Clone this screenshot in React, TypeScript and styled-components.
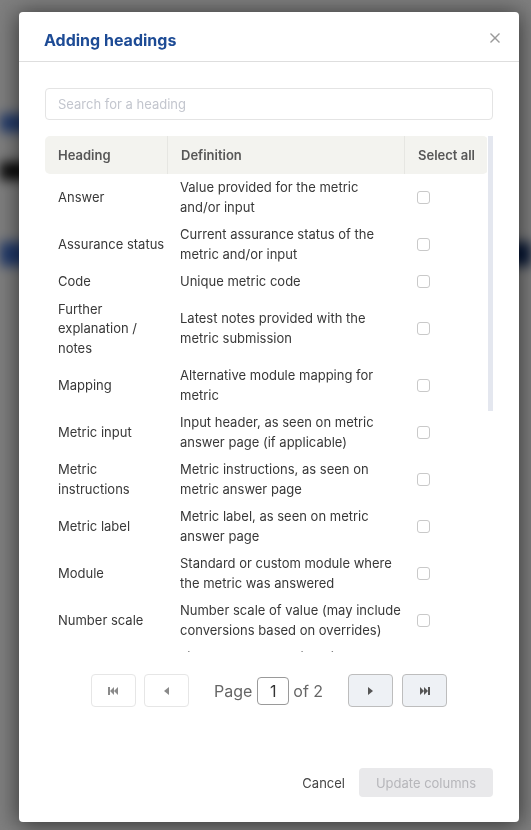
import React from "react";
import styled, { createGlobalStyle } from "styled-components";

interface HeadingOption {
  id: number;
  heading: string;
  definition: string;
}

const headings: HeadingOption[] = [
  { id: 1, heading: "Answer", definition: "Value provided for the metric and/or input" },
  { id: 2, heading: "Assurance status", definition: "Current assurance status of the metric and/or input" },
  { id: 3, heading: "Code", definition: "Unique metric code" },
  { id: 4, heading: "Further explanation / notes", definition: "Latest notes provided with the metric submission" },
  { id: 5, heading: "Mapping", definition: "Alternative module mapping for metric" },
  { id: 6, heading: "Metric input", definition: "Input header, as seen on metric answer page (if applicable)" },
  { id: 7, heading: "Metric instructions", definition: "Metric instructions, as seen on metric answer page" },
  { id: 8, heading: "Metric label", definition: "Metric label, as seen on metric answer page" },
  { id: 9, heading: "Module", definition: "Standard or custom module where the metric was answered" },
  { id: 10, heading: "Number scale", definition: "Number scale of value (may include conversions based on overrides)" },
  { id: 11, heading: "Previous period", definition: "Link to answer provided in the previous period" },
  { id: 12, heading: "Reporting period", definition: "Start and end date of the reporting period" },
  { id: 13, heading: "Source", definition: "Source of the data provided for the metric" },
  { id: 14, heading: "Status", definition: "Current status of the metric submission" },
  { id: 15, heading: "Subsidiary", definition: "Name of the subsidiary providing the answer" },
  { id: 16, heading: "Tags", definition: "Tags assigned to the metric" },
  { id: 17, heading: "Type", definition: "Data type of the value provided for the metric" },
  { id: 18, heading: "Unit", definition: "Unit of measure of the value (if applicable)" },
  { id: 19, heading: "Updated by", definition: "User who last updated the metric answer" },
  { id: 20, heading: "Updated date", definition: "Date and time the metric answer was last updated" },
];

const GlobalStyle = createGlobalStyle`
  html, body {
    margin: 0;
    padding: 0;
  }
  body {
    width: 531px;
    height: 830px;
    overflow: hidden;
    font-family: Inter, "Noto Sans", sans-serif;
  }
`;

/* blurred page behind the dialog */
const Page = styled.div`
  height: 830px;
  box-sizing: border-box;
  background: #f8f8f8;
  filter: blur(6px);
  display: flex;
  flex-direction: column;
  padding-top: 114px;
`;

const PageRow = styled.div<{ $h: number; $top: number }>`
  display: flex;
  justify-content: space-between;
  height: ${(p) => p.$h}px;
  margin-top: ${(p) => p.$top}px;
`;

const Smudge = styled.div<{ $w: number; $color: string }>`
  width: ${(p) => p.$w}px;
  background: ${(p) => p.$color};
`;

const Overlay = styled.div`
  position: fixed;
  inset: 0;
  background: rgba(0, 0, 0, 0.5);
  display: flex;
  align-items: flex-start;
  padding: 12px 0 0 19px;
`;

const Modal = styled.div`
  width: 500px;
  height: 810px;
  background: #fff;
  border-radius: 4px;
  box-shadow: 0 2px 22px rgba(0, 0, 0, 0.6);
  display: flex;
  flex-direction: column;
  box-sizing: border-box;
`;

const Header = styled.div`
  height: 50px;
  box-sizing: border-box;
  border-bottom: 1px solid #dedede;
  padding: 18px 19px 0 25px;
  display: flex;
  justify-content: space-between;
  align-items: flex-start;
`;

const Title = styled.h2`
  margin: 0;
  font-size: 16px;
  line-height: 20px;
  font-weight: 700;
  color: #1d4b95;
`;

const Close = styled.button`
  border: none;
  background: none;
  padding: 0;
  margin-top: 3px;
  display: flex;
  cursor: pointer;
`;

const Body = styled.div`
  padding: 26px 26px 0 26px;
  display: flex;
  flex-direction: column;
`;

const Search = styled.input`
  height: 32px;
  box-sizing: border-box;
  border: 1px solid #e4e4e4;
  border-radius: 4px;
  padding: 0 12px;
  font-family: inherit;
  font-size: 13px;
  color: #333;
  outline: none;
  &::placeholder {
    color: #c3c6ce;
  }
`;

const ScrollFrame = styled.div`
  margin-top: 16px;
  height: 516px;
  display: flex;
`;

const ScrollViewport = styled.div`
  flex: 1;
  overflow: hidden;
`;

const ScrollTrack = styled.div`
  width: 5px;
  margin-left: 1px;
`;

const ScrollThumb = styled.div`
  height: 275px;
  background: #e4e7ef;
`;

const Table = styled.table`
  width: 100%;
  table-layout: fixed;
  border-collapse: separate;
  border-spacing: 0;
`;

const Col = styled.col<{ $w: number }>`
  width: ${(p) => p.$w}px;
`;

const Th = styled.th`
  background: #f3f3ef;
  text-align: left;
  font-size: 13px;
  line-height: 20px;
  font-weight: 600;
  color: #575757;
  padding: 9px 0 9px 13px;
  border-left: 1px solid #e6e6e2;
  white-space: nowrap;
  &:first-child {
    border-left: none;
    border-radius: 5px 0 0 5px;
  }
  &:last-child {
    border-radius: 0 5px 5px 0;
  }
`;

const Td = styled.td<{ $padRight?: number }>`
  font-size: 13px;
  line-height: 19.5px;
  color: #383838;
  padding: 4px ${(p) => p.$padRight ?? 0}px 4px 13px;
  vertical-align: middle;
`;

const Check = styled.input`
  appearance: none;
  display: block;
  margin: 0;
  width: 13px;
  height: 13px;
  box-sizing: border-box;
  border: 1px solid #c9c9c9;
  border-radius: 3px;
  background: #fff;
`;

const Pager = styled.div`
  margin-top: 22px;
  display: flex;
  justify-content: center;
  align-items: center;
`;

const PageButton = styled.button<{ $active?: boolean; $gap: number }>`
  width: 45px;
  height: 33px;
  box-sizing: border-box;
  border-radius: 4px;
  border: 1px solid ${(p) => (p.$active ? "#bdbdbd" : "#e6e6e6")};
  background: ${(p) => (p.$active ? "#eef1f5" : "#fff")};
  color: ${(p) => (p.$active ? "#555" : "#8a8a8a")};
  margin-left: ${(p) => p.$gap}px;
  display: flex;
  align-items: center;
  justify-content: center;
  padding: 0;
`;

const PageInfo = styled.div`
  margin: 0 25px;
  display: flex;
  align-items: center;
  gap: 4px;
  font-size: 16px;
  color: #666;
`;

const PageInput = styled.input`
  width: 32px;
  height: 28px;
  box-sizing: border-box;
  margin-left: 1px;
  border: 1px solid #9a9a9a;
  border-radius: 4px;
  text-align: center;
  font-family: inherit;
  font-size: 16px;
  color: #333;
  padding: 0;
`;

const Footer = styled.div`
  margin-top: auto;
  padding: 0 26px 25px;
  display: flex;
  justify-content: flex-end;
  align-items: center;
  gap: 14px;
`;

const TextButton = styled.button`
  border: none;
  background: none;
  padding: 0;
  font-family: inherit;
  font-size: 13px;
  color: #444;
`;

const PrimaryButton = styled.button`
  width: 134px;
  height: 29px;
  border: none;
  border-radius: 4px;
  background: #e9e9eb;
  color: #b6b6ba;
  font-family: inherit;
  font-size: 13px;
`;

const FirstIcon = () => (
  <svg width="10" height="8" viewBox="0 0 10 8" fill="currentColor">
    <rect x="0" y="0" width="2" height="8" />
    <polygon points="2,4 6,0 6,8" />
    <polygon points="6,4 10,0 10,8" />
  </svg>
);

const LastIcon = () => (
  <svg width="10" height="8" viewBox="0 0 10 8" fill="currentColor">
    <polygon points="0,0 4,4 0,8" />
    <polygon points="4,0 8,4 4,8" />
    <rect x="8" y="0" width="2" height="8" />
  </svg>
);

const PrevIcon = () => (
  <svg width="5" height="8" viewBox="0 0 5 8" fill="currentColor">
    <polygon points="0,4 5,0 5,8" />
  </svg>
);

const NextIcon = () => (
  <svg width="5" height="8" viewBox="0 0 5 8" fill="currentColor">
    <polygon points="0,0 5,4 0,8" />
  </svg>
);

export default function App() {
  return (
    <>
      <GlobalStyle />
      <Page>
        <PageRow $h={18} $top={0}>
          <Smudge $w={40} $color="#3f6fd0" />
        </PageRow>
        <PageRow $h={18} $top={30}>
          <Smudge $w={60} $color="#111" />
        </PageRow>
        <PageRow $h={24} $top={62}>
          <Smudge $w={40} $color="#3f6fd0" />
          <Smudge $w={40} $color="#0b2a66" />
        </PageRow>
      </Page>
      <Overlay>
        <Modal>
          <Header>
            <Title>Adding headings</Title>
            <Close aria-label="Close">
              <svg width="10" height="10" viewBox="0 0 10 10" stroke="#9a9a9a" strokeWidth="1.3">
                <line x1="0.5" y1="0.5" x2="9.5" y2="9.5" />
                <line x1="9.5" y1="0.5" x2="0.5" y2="9.5" />
              </svg>
            </Close>
          </Header>
          <Body>
            <Search placeholder="Search for a heading" />
            <ScrollFrame>
              <ScrollViewport>
                <Table>
                  <colgroup>
                    <Col $w={122} />
                    <Col $w={237} />
                    <Col $w={84} />
                  </colgroup>
                  <thead>
                    <tr>
                      <Th>Heading</Th>
                      <Th>Definition</Th>
                      <Th>Select all</Th>
                    </tr>
                  </thead>
                  <tbody>
                    {headings.map((el) => (
                      <tr key={el.id}>
                        <Td>{el.heading}</Td>
                        <Td $padRight={3}>{el.definition}</Td>
                        <Td>
                          <Check type="checkbox" />
                        </Td>
                      </tr>
                    ))}
                  </tbody>
                </Table>
              </ScrollViewport>
              <ScrollTrack>
                <ScrollThumb />
              </ScrollTrack>
            </ScrollFrame>
            <Pager>
              <PageButton $gap={0} disabled>
                <FirstIcon />
              </PageButton>
              <PageButton $gap={8} disabled>
                <PrevIcon />
              </PageButton>
              <PageInfo>
                Page <PageInput defaultValue="1" /> of 2
              </PageInfo>
              <PageButton $gap={0} $active>
                <NextIcon />
              </PageButton>
              <PageButton $gap={9} $active>
                <LastIcon />
              </PageButton>
            </Pager>
          </Body>
          <Footer>
            <TextButton>Cancel</TextButton>
            <PrimaryButton disabled>Update columns</PrimaryButton>
          </Footer>
        </Modal>
      </Overlay>
    </>
  );
}
